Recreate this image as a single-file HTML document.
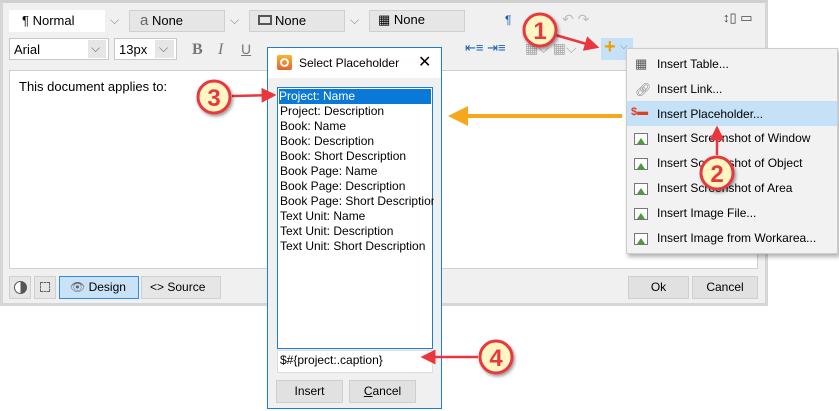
<!DOCTYPE html>
<html><head><meta charset="utf-8"><style>
body{margin:0;width:839px;height:411px;position:relative;overflow:hidden;background:#fff;font-family:"Liberation Sans",Arial,sans-serif;font-size:12px;color:#000}
.a{position:absolute;box-sizing:border-box}
.win{left:0;top:0;width:768px;height:306px;background:#f0f0f0;border:3px solid #d6d6d6;border-top:3px solid #d0d0d0}
.box{background:#e6e6e6;border:1px solid #d0d0d0}
.wbox{background:#fff;border:1px solid #c8c8c8}
.t{position:absolute;white-space:nowrap}
.btn{background:#e1e1e1;border:1px solid #cfcfcf;text-align:center;line-height:21px;font-size:12px}
.mi{position:absolute;left:30px;font-size:12px;white-space:nowrap}
.ic{position:absolute;left:7px;width:12px;height:10px;border:1px solid #777;background:#fff}
.ic:after{content:"";position:absolute;left:2px;bottom:0;border-left:4px solid transparent;border-right:4px solid transparent;border-bottom:6px solid #4a9b3a}
.li{position:absolute;left:2px;height:15px;line-height:15px;font-size:12px;width:154px;white-space:nowrap;overflow:hidden}
</style></head><body>
<div class="a win"></div>
<!-- row1 -->
<div class="a" style="left:9px;top:10px;width:96px;height:22px;background:#fff"></div>
<div class="t" style="left:22px;top:13px;font-size:13px">¶ Normal</div>
<div class="t" style="left:110px;top:13px;color:#888">⌵</div>
<div class="a box" style="left:129px;top:10px;width:96px;height:22px"></div>
<div class="t" style="left:140px;top:12px;font-size:13px"><span style="color:#666;font-size:15px">a</span> None</div>
<div class="t" style="left:230px;top:13px;color:#888">⌵</div>
<div class="a box" style="left:249px;top:10px;width:96px;height:22px"></div>
<div class="a" style="left:258px;top:15px;width:14px;height:10px;border:2px solid #555"></div>
<div class="t" style="left:275px;top:13px;font-size:13px">None</div>
<div class="t" style="left:350px;top:13px;color:#888">⌵</div>
<div class="a box" style="left:369px;top:10px;width:96px;height:22px"></div>
<div class="t" style="left:378px;top:12px;font-size:13px">▦ None</div>
<div class="t" style="left:505px;top:13px;color:#1a5fb4;font-size:12px">¶</div>
<div class="t" style="left:562px;top:11px;color:#bbb;font-size:14px">↶ ↷</div>
<div class="t" style="left:723px;top:10px;font-size:13px;color:#444">↕▯ ▭</div>
<!-- row2 -->
<div class="a wbox" style="left:9px;top:38px;width:100px;height:22px"></div>
<div class="t" style="left:14px;top:42px;font-size:13px">Arial</div>
<div class="a" style="left:88px;top:40px;width:18px;height:18px;background:#e6e6e6"></div>
<div class="t" style="left:91px;top:41px;color:#666">⌵</div>
<div class="a wbox" style="left:114px;top:38px;width:63px;height:22px"></div>
<div class="t" style="left:119px;top:42px;font-size:13px">13px</div>
<div class="a" style="left:155px;top:40px;width:19px;height:18px;background:#e6e6e6"></div>
<div class="t" style="left:159px;top:41px;color:#666">⌵</div>
<div class="t" style="left:192px;top:41px;font-family:'Liberation Serif';font-weight:bold;font-size:16px;color:#777">B</div>
<div class="t" style="left:218px;top:41px;font-family:'Liberation Serif';font-style:italic;font-size:16px;color:#777">I</div>
<div class="t" style="left:241px;top:41px;font-size:14px;color:#777;text-decoration:underline">U</div>
<div class="t" style="left:465px;top:40px;color:#1a5fb4;font-size:13px">⇤≡ ⇥≡</div>
<div class="t" style="left:525px;top:40px;color:#aaa;font-size:14px">▦⌵ ▦⌵</div>
<div class="a" style="left:601px;top:38px;width:32px;height:22px;background:#c5e1f7"></div>
<div class="t" style="left:604px;top:36px;color:#f0a000;font-size:20px;font-weight:bold">+</div>
<div class="t" style="left:620px;top:41px;color:#888;font-size:10px">⌵</div>
<!-- editor -->
<div class="a" style="left:9px;top:70px;width:749px;height:199px;background:#fff;border:1px solid #d0d0d0"></div>
<div class="t" style="left:19px;top:79px;font-size:13px">This document applies to:</div>
<!-- bottom bar -->
<div class="a box" style="left:9px;top:276px;width:22px;height:23px"></div>
<div class="a" style="left:14px;top:281px;width:13px;height:13px;border-radius:50%;border:1px solid #555;background:linear-gradient(90deg,#fff 50%,#555 50%)"></div>
<div class="a box" style="left:34px;top:276px;width:22px;height:23px"></div>
<div class="a" style="left:40px;top:282px;width:10px;height:10px;border:1px dashed #666"></div>
<div class="a" style="left:59px;top:276px;width:80px;height:23px;background:#c9e2f8;border:1px solid #2a8de0"></div>
<div class="t" style="left:70px;top:280px;font-size:12px"><span style="color:#666">👁</span> Design</div>
<div class="a box" style="left:141px;top:276px;width:80px;height:23px"></div>
<div class="t" style="left:150px;top:280px;font-size:12px">&lt;&gt; Source</div>
<div class="a btn" style="left:628px;top:276px;width:61px;height:23px">Ok</div>
<div class="a btn" style="left:692px;top:276px;width:66px;height:23px">Cancel</div>
<!-- menu -->
<div class="a" style="left:626px;top:48px;width:212px;height:206px;background:#f2f2f2;border:1px solid #ccc;box-shadow:2px 3px 4px rgba(0,0,0,.3)">
 <div class="a" style="left:0;top:52px;width:210px;height:25px;background:#c5e1f7"></div>
 <div class="t" style="left:8px;top:7px;color:#555;font-size:13px">▦</div><div class="mi" style="top:8px">Insert Table...</div>
 <div class="t" style="left:8px;top:33px;color:#888;font-size:13px">🔗︎</div><div class="mi" style="top:33px">Insert Link...</div>
 <div class="t" style="left:4px;top:57px;color:#e04020;font-size:11px;font-weight:bold">$▬</div><div class="mi" style="top:58px">Insert Placeholder...</div>
 <div class="ic" style="top:84px"></div><div class="mi" style="top:82px">Insert Screenshot of Window</div>
 <div class="ic" style="top:109px"></div><div class="mi" style="top:107px">Insert Screenshot of Object</div>
 <div class="ic" style="top:134px"></div><div class="mi" style="top:132px">Insert Screenshot of Area</div>
 <div class="ic" style="top:159px"></div><div class="mi" style="top:157px">Insert Image File...</div>
 <div class="ic" style="top:184px"></div><div class="mi" style="top:182px">Insert Image from Workarea...</div>
</div>
<!-- dialog -->
<div class="a" style="left:267px;top:47px;width:175px;height:362px;background:#f0f0f0;border:1px solid #1a7fd4">
 <div class="a" style="left:0;top:0;width:173px;height:30px;background:#fff"></div>
 <div class="a" style="left:9px;top:7px;width:15px;height:15px;border-radius:2px;background:linear-gradient(#f7b733,#e8602c)"></div>
 <div class="a" style="left:12px;top:10px;width:9px;height:9px;border-radius:50%;border:2px solid #fff"></div>
 <div class="t" style="left:31px;top:8px;font-size:12px">Select Placeholder</div>
 <div class="t" style="left:150px;top:4px;font-size:16px">✕</div>
 <div class="a" style="left:9px;top:39px;width:156px;height:262px;background:#fff;border:1px solid #1a7fd4">
  <div class="li" style="top:1px;left:1px;width:152px;background:#0a78d7;color:#fff">Project: Name</div>
  <div class="li" style="top:16px">Project: Description</div>
  <div class="li" style="top:31px">Book: Name</div>
  <div class="li" style="top:46px">Book: Description</div>
  <div class="li" style="top:61px">Book: Short Description</div>
  <div class="li" style="top:76px">Book Page: Name</div>
  <div class="li" style="top:91px">Book Page: Description</div>
  <div class="li" style="top:106px">Book Page: Short Description</div>
  <div class="li" style="top:121px">Text Unit: Name</div>
  <div class="li" style="top:136px">Text Unit: Description</div>
  <div class="li" style="top:151px">Text Unit: Short Description</div>
 </div>
 <div class="a" style="left:9px;top:302px;width:156px;height:23px;background:#fff;border:1px solid #ddd"></div>
 <div class="t" style="left:12px;top:305px">$#{project:.caption}</div>
 <div class="a btn" style="left:8px;top:332px;width:67px;height:23px">Insert</div>
 <div class="a btn" style="left:81px;top:332px;width:67px;height:23px"><u>C</u>ancel</div>
</div>
<!-- overlays -->
<svg class="a" style="left:0;top:0" width="839" height="411">
<defs><marker id="r" markerWidth="6" markerHeight="6" refX="5" refY="3" orient="auto"><path d="M0,0 L6,3 L0,6z" fill="#e8383d"/></marker>
<marker id="o" markerWidth="5" markerHeight="5" refX="4" refY="2.5" orient="auto"><path d="M0,0 L5,2.5 L0,5z" fill="#f5a81c"/></marker>
<filter id="s"><feDropShadow dx="1.5" dy="2" stdDeviation="1.5" flood-opacity=".4"/></filter></defs>
<line x1="622" y1="116" x2="452" y2="116" stroke="#f5a81c" stroke-width="4" marker-end="url(#o)"/>
<line x1="552" y1="34" x2="597" y2="47" stroke="#e8383d" stroke-width="2.5" marker-end="url(#r)"/>
<line x1="717" y1="155" x2="717" y2="128" stroke="#e8383d" stroke-width="2.5" marker-end="url(#r)"/>
<line x1="232" y1="96" x2="274" y2="95" stroke="#e8383d" stroke-width="2.5" marker-end="url(#r)"/>
<line x1="478" y1="357" x2="423" y2="357" stroke="#e8383d" stroke-width="2.5" marker-end="url(#r)"/>
<g filter="url(#s)" font-family="Liberation Sans" font-weight="bold" font-size="24" fill="#e8383d" text-anchor="middle">
<circle cx="540" cy="30" r="16" fill="#fff6c4" stroke="#e8383d" stroke-width="3"/><text x="540" y="39">1</text>
<circle cx="717" cy="173" r="16" fill="#fff6c4" stroke="#e8383d" stroke-width="3"/><text x="717" y="182">2</text>
<circle cx="214" cy="97" r="16" fill="#fff6c4" stroke="#e8383d" stroke-width="3"/><text x="214" y="106">3</text>
<circle cx="496" cy="357" r="16" fill="#fff6c4" stroke="#e8383d" stroke-width="3"/><text x="496" y="366">4</text>
</g>
</svg>
</body></html>
